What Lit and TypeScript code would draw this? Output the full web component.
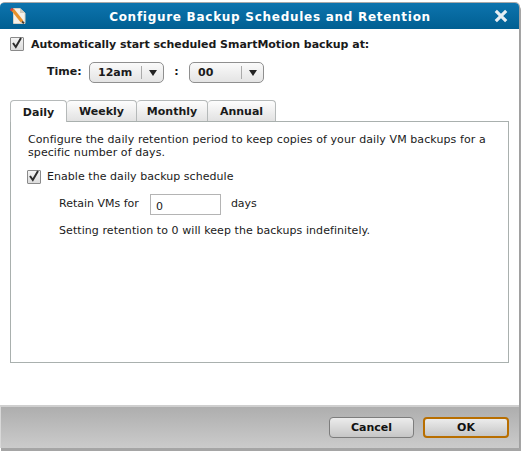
import { LitElement, html, css } from "lit";
import { customElement } from "lit/decorators.js";

const check = html`<svg viewBox="0 0 14 14" width="14" height="14"><path d="M3 7 L5.8 11 L11 2" fill="none" stroke="#2c2c2c" stroke-width="2"/></svg>`;

@customElement("app-root")
export class AppRoot extends LitElement {
  static styles = css`
    :host { display: block; width: 522px; height: 452px; background: #fff; font-family: "DejaVu Sans", Verdana, sans-serif; font-size: 11px; color: #1a1a1a; overflow: hidden; }
    .dialog { width: 520px; height: 446px; margin-top: 2px; display: flex; flex-direction: column; border-top: 1px solid #a8a8a8; border-right: 1px solid #a0a0a0; box-sizing: border-box; box-shadow: 1px 3px 0 #a5a5a5; border-radius: 5px 5px 0 0; }
    .head { height: 26px; flex: none; display: flex; align-items: center; justify-content: center; background: linear-gradient(#0d74ae, #005f92); color: #fff; font-weight: 700; font-size: 12px; letter-spacing: 0.72px; position: relative; border-radius: 4px 4px 0 0; padding: 2px 0 0 21px; box-sizing: border-box; }
    .logo { position: absolute; left: 9px; top: 4px; }
    .close { position: absolute; right: 11px; top: 6px; }
    .body { flex: 1; background: #fff; padding: 7px 10px 0 10px; display: flex; flex-direction: column; min-height: 0; }
    .row { display: flex; align-items: center; }
    .cb { width: 14px; height: 14px; flex: none; box-sizing: border-box; border: 1px solid #8a8a8a; background: linear-gradient(#f4f4f4, #dcdcdc); display: flex; align-items: center; justify-content: center; border-radius: 1px; }
    .cb svg { flex: none; margin-top: -1px; }
    .auto { gap: 7px; font-weight: 700; height: 15px; letter-spacing: -0.04px; }
    .auto span { padding-top: 2px; }
    .time { margin-top: 11px; height: 21px; font-weight: 700; }
    .time-label { margin-left: 37px; width: 42px; margin-top: -2px; }
    .sel { width: 75px; height: 21px; box-sizing: border-box; border: 1px solid #8f8f8f; border-radius: 5px; background: linear-gradient(#fafafa, #e4e4e4); display: flex; align-items: center; padding-left: 8px; }
    .sel span { flex: 1; }
    .sel i { width: 21px; height: 13px; border-left: 1px solid #aaa; display: flex; align-items: center; justify-content: center; flex: none; }
    .colon { width: 25px; text-align: center; margin-top: -2px; }
    .tabs { display: flex; margin-top: 17px; height: 21px; position: relative; z-index: 1; align-items: flex-start; }
    .tab { height: 21px; box-sizing: border-box; border: 1px solid #b5b9b9; border-left: 0; border-bottom: 0; border-radius: 4px 4px 0 0; background: linear-gradient(#fdfdfd, #e2e2e2); font-weight: 700; display: flex; align-items: center; justify-content: center; }
    .tab.on { height: 22px; background: #fff; border-left: 1px solid #b5b9b9; padding-top: 2px; }
    .panel { height: 242px; flex: none; box-sizing: border-box; border: 1px solid #a9b0ae; background: #fff; padding: 11px 17px 0 17px; line-height: 13px; }
    .panel p { margin: 0; letter-spacing: 0.085px; }
    .enable { gap: 6px; margin: 10px 0 0 -1px; height: 15px; letter-spacing: 0.05px; }
    .retain { margin-left: 31px; margin-top: 10px; height: 21px; }
    .retain > span { margin-top: -3px; }
    .retain .input { width: 71px; height: 21px; box-sizing: border-box; border: 1px solid #b4b4b4; margin-left: 11px; margin-right: 10px; padding: 5px 0 0 5px; line-height: 13px; }
    .panel .note { margin: 9px 0 0 31px; letter-spacing: 0.07px; }
    .foot { height: 43px; flex: none; border-top: 2px solid #cfcfcf; border-left: 1px solid #d8d8d8; box-sizing: border-box; background: linear-gradient(#aeaeae, #cbcbcb); display: flex; justify-content: flex-end; align-items: flex-start; gap: 9px; padding: 10px 10px 0 0; }
    .btn { height: 21px; width: 85px; box-sizing: border-box; border: 1px solid #7d7d7d; border-radius: 4px; background: linear-gradient(#ececec, #c6c6c6); font-weight: 700; display: flex; align-items: center; justify-content: center; color: #111; }
    .btn.ok { width: 86px; border: 2px solid #b86e00; }
  `;

  render() {
    const tri = html`<svg width="8" height="6" viewBox="0 0 8 6"><path d="M0 0H8L4 6Z" fill="#222"/></svg>`;
    return html`<div class="dialog">
      <div class="head">
        <svg class="logo" width="18" height="18" viewBox="0 0 18 18">
          <path d="M4.5 1.5H11L16 6V16.5H4.5Z" fill="#f4f1ea" stroke="#d6d1c4"/>
          <path d="M11 1.5V6H16" fill="#cfcabd"/>
          <path d="M3.5 2.5L13 14.5" stroke="#e8912c" stroke-width="3.2"/>
          <path d="M1.8 1.8L3.6 3.4" stroke="#d8433a" stroke-width="3"/>
          <path d="M13 14.5L15 16.2" stroke="#4a3a2a" stroke-width="2"/>
        </svg>
        <span>Configure Backup Schedules and Retention</span>
        <svg class="close" width="14" height="14" viewBox="0 0 14 14"><path d="M1.8 1.8L12.2 12.2M12.2 1.8L1.8 12.2" stroke="#e6eef3" stroke-width="3.2"/></svg>
      </div>
      <div class="body">
        <div class="row auto"><div class="cb">${check}</div><span>Automatically start scheduled SmartMotion backup at:</span></div>
        <div class="row time">
          <span class="time-label">Time:</span>
          <div class="sel"><span>12am</span><i>${tri}</i></div>
          <span class="colon">:</span>
          <div class="sel"><span>00</span><i>${tri}</i></div>
        </div>
        <div class="tabs">
          <div class="tab on" style="width:57px">Daily</div>
          <div class="tab" style="width:70px">Weekly</div>
          <div class="tab" style="width:71px">Monthly</div>
          <div class="tab" style="width:68px">Annual</div>
        </div>
        <div class="panel">
          <p>Configure the daily retention period to keep copies of your daily VM backups for a specific number of days.</p>
          <div class="row enable"><div class="cb">${check}</div><span>Enable the daily backup schedule</span></div>
          <div class="row retain"><span>Retain VMs for</span><div class="input">0</div><span>days</span></div>
          <p class="note">Setting retention to 0 will keep the backups indefinitely.</p>
        </div>
      </div>
      <div class="foot"><div class="btn">Cancel</div><div class="btn ok">OK</div></div>
    </div>`;
  }
}
